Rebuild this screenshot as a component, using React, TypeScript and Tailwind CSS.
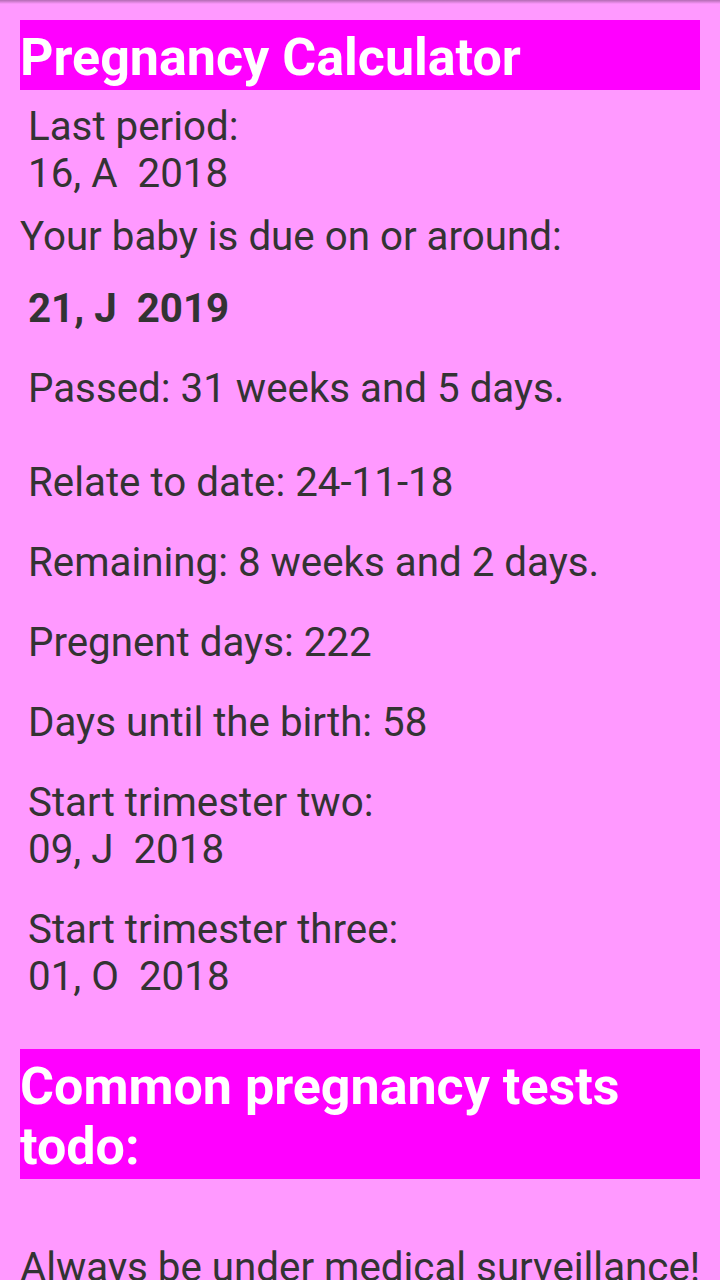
export default function App() {
  return (
    <div className="relative min-h-screen w-full overflow-hidden bg-[#ff99ff] text-[#333333] font-['Roboto',sans-serif]">
      {/* status bar shadow */}
      <div className="absolute left-0 right-0 top-0 h-[4px] bg-gradient-to-b from-black/30 to-transparent" />

      <div className="mx-[20px] mt-[20px] bg-[#ff00ff] pt-[8px] pb-[2px]">
        <h1 className="text-[52px] leading-[60px] font-bold text-white">Pregnancy Calculator</h1>
      </div>

      <div className="px-[20px] text-[40.3px] leading-[47px]">
        <div className="mt-[13px] pl-[8px] whitespace-pre">
          <div>Last period:</div>
          <div>16, A  2018</div>
        </div>

        <p className="mt-[16px]">Your baby is due on or around:</p>

        <p className="mt-[25px] pl-[8px] font-bold whitespace-pre">21, J  2019</p>

        <p className="mt-[33px] pl-[8px]">Passed: 31 weeks and 5 days.</p>

        <p className="mt-[47px] pl-[8px]">Relate to date: 24-11-18</p>
        <p className="mt-[33px] pl-[8px]">Remaining: 8 weeks and 2 days.</p>
        <p className="mt-[33px] pl-[8px]">Pregnent days: 222</p>
        <p className="mt-[33px] pl-[8px]">Days until the birth: 58</p>

        <div className="mt-[33px] pl-[8px] whitespace-pre">
          <div>Start trimester two:</div>
          <div>09, J  2018</div>
        </div>

        <div className="mt-[33px] pl-[8px] whitespace-pre">
          <div>Start trimester three:</div>
          <div>01, O  2018</div>
        </div>
      </div>

      <div className="mx-[20px] mt-[49px] bg-[#ff00ff] pt-[8px] pb-[2px]">
        <h2 className="text-[52px] leading-[60px] font-bold text-white">
          Common pregnancy tests
          <br />
          todo:
        </h2>
      </div>

      <p className="mt-[65px] px-[20px] text-[40.3px] leading-[47px] whitespace-nowrap">
        Always be under medical surveillance!
      </p>
    </div>
  );
}
